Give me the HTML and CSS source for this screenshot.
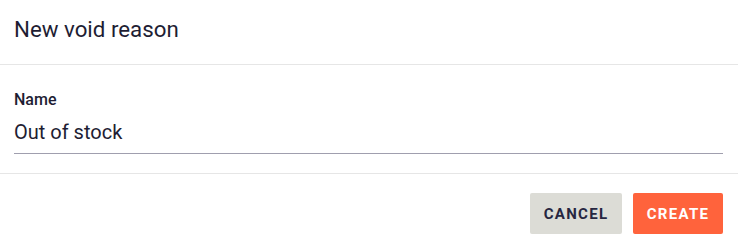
FILE: index.html
```html
<!DOCTYPE html>
<html>
<head>
<meta charset="utf-8">
<link rel="stylesheet" href="styles.css">
</head>
<body>
<div class="dialog">
  <div class="header"><h1 class="title">New void reason</h1></div>
  <div class="content">
    <label class="label">Name</label>
    <div class="input">Out of stock</div>
  </div>
  <div class="footer">
    <button class="btn btn-cancel">CANCEL</button>
    <button class="btn btn-create">CREATE</button>
  </div>
</div>
</body>
</html>
```
FILE: styles.css
```css
html, body { margin: 0; padding: 0; background: #fff; }
body { font-family: Roboto, "Liberation Sans", sans-serif; color: #1e1d33; width: 738px; height: 251px; overflow: hidden; }
.dialog { display: flex; flex-direction: column; }
.header { height: 65px; box-sizing: border-box; border-bottom: 1px solid #e6e6e6; display: flex; align-items: center; padding: 0 14px 7px; }
.title { margin: 0; font-size: 22.3px; font-weight: 400; line-height: 26px; }
.content { padding: 25px 14px 0 14px; height: 109px; box-sizing: border-box; border-bottom: 1px solid #e6e6e6; }
.label { display: block; font-size: 16px; font-weight: 500; line-height: 20px; }
.input { font-size: 20px; line-height: 26px; margin-top: 9px; padding-bottom: 8px; border-bottom: 1px solid #a09fae; margin-right: 1px; }
.footer { display: flex; justify-content: flex-end; gap: 11px; padding: 19px 15px 0 0; }
.btn { border: none; border-radius: 2px; height: 41px; font-family: Roboto, "Liberation Sans", sans-serif; font-size: 15px; font-weight: 700; letter-spacing: 1.3px; padding: 0; }
.btn-cancel { width: 92px; background: #dcdcd6; color: #262640; }
.btn-create { width: 90px; background: #ff633c; color: #fff; }
```
